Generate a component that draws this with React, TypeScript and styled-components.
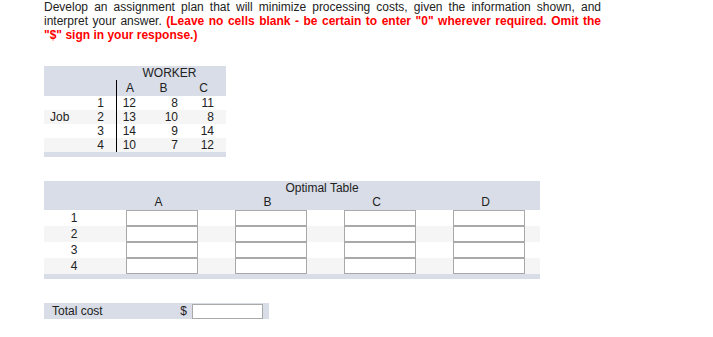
import React from "react";
import styled, { createGlobalStyle } from "styled-components";

const Global = createGlobalStyle`
  html, body { margin: 0; padding: 0; background: #fff; }
  body { font-family: "Liberation Sans", Arial, sans-serif; font-size: 12px; color: #222; }
`;

const Page = styled.div`
  padding-left: 44px;
  display: flex;
  flex-direction: column;
  align-items: flex-start;
`;

const Prompt = styled.p`
  margin: 0;
  width: 557px;
  line-height: 14px;
  text-align: justify;
`;

const Warn = styled.strong`
  color: #f00;
  font-weight: bold;
`;

const HEAD = "#d9dde7";
const STRIPE = "#f5f5f5";

/* ---------- top cost table ---------- */
const CostTable = styled.div`
  margin-top: 24px;
  width: 182px;
  display: flex;
  flex-direction: column;
`;

const costCols = "44px 28px 27px 41px 39px 3px";

const CostRow = styled.div<{ $bg: string; $h: number }>`
  display: grid;
  grid-template-columns: ${costCols};
  height: ${(p) => p.$h}px;
  background: ${(p) => p.$bg};
  line-height: ${(p) => p.$h}px;
`;

const CostCell = styled.div<{ $align?: string; $pad?: number; $line?: boolean; $span?: number; $under?: boolean }>`
  text-align: ${(p) => p.$align || "left"};
  padding-left: ${(p) => (p.$align === "left" || !p.$align ? p.$pad ?? 0 : 0)}px;
  padding-right: ${(p) => (p.$align === "right" ? p.$pad ?? 0 : 0)}px;
  border-left: ${(p) => (p.$line ? "1px solid #000" : "none")};
  border-bottom: ${(p) => (p.$under ? "1px solid #000" : "none")};
  grid-column: ${(p) => (p.$span ? `span ${p.$span}` : "auto")};
  box-sizing: border-box;
  white-space: nowrap;
`;

const BottomBar = styled.div<{ $w?: number }>`
  height: 5px;
  background: ${HEAD};
`;

/* ---------- optimal table ---------- */
const OptTable = styled.div`
  margin-top: 24px;
  width: 496px;
  display: flex;
  flex-direction: column;
`;

const optCols = "60px 109px 109px 109px 109px";

const OptRow = styled.div<{ $bg: string; $h: number }>`
  display: grid;
  grid-template-columns: ${optCols};
  height: ${(p) => p.$h}px;
  background: ${(p) => p.$bg};
`;

const OptTitle = styled.div`
  grid-column: 2 / span 4;
  border-bottom: 1px solid #000;
  text-align: center;
  line-height: 14px;
  height: 14px;
`;

const OptHead = styled.div`
  text-align: center;
  line-height: 15px;
`;

const RowNum = styled.div`
  text-align: center;
  line-height: 16px;
`;

const BoxCell = styled.div`
  display: flex;
  justify-content: flex-end;
  padding-right: 15px;
`;

const Box = styled.input<{ $w?: number; $h?: number }>`
  box-sizing: border-box;
  width: ${(p) => p.$w ?? 72}px;
  height: ${(p) => p.$h ?? 16}px;
  margin: 0;
  padding: 0 2px;
  border: 1px solid #a9a9a9;
  background: #fff;
  font: inherit;
  outline: none;
`;

/* ---------- total cost ---------- */
const TotalBar = styled.div`
  margin-top: 24px;
  width: 225px;
  height: 16px;
  background: ${HEAD};
  display: flex;
  align-items: center;
  padding: 0 6px 0 8px;
  box-sizing: border-box;
`;

const TotalLabel = styled.span`
  flex: 1;
`;

const Dollar = styled.span`
  margin-right: 5px;
`;

const costs = [
  ["1", "12", "8", "11"],
  ["2", "13", "10", "8"],
  ["3", "14", "9", "14"],
  ["4", "10", "7", "12"],
];

export default function App() {
  return (
    <>
      <Global />
      <Page>
        <Prompt>
          Develop an assignment plan that will minimize processing costs, given the information shown, and
          interpret your answer.{" "}
          <Warn>
            (Leave no cells blank - be certain to enter "0" wherever required. Omit the "$" sign in your
            response.)
          </Warn>
        </Prompt>

        <CostTable>
          <CostRow $bg={HEAD} $h={14}>
            <CostCell />
            <CostCell />
            <CostCell $span={3} $align="center" $under>
              WORKER
            </CostCell>
            <CostCell />
          </CostRow>
          <CostRow $bg={HEAD} $h={16}>
            <CostCell />
            <CostCell />
            <CostCell $align="center" $line>
              A
            </CostCell>
            <CostCell $align="center">B</CostCell>
            <CostCell $align="center">C</CostCell>
            <CostCell />
          </CostRow>
          {costs.map((r, i) => (
            <CostRow key={r[0]} $bg={i % 2 === 1 ? STRIPE : "#fff"} $h={14}>
              <CostCell $pad={6}>{i === 1 ? "Job" : ""}</CostCell>
              <CostCell $align="right" $pad={12}>
                {r[0]}
              </CostCell>
              <CostCell $align="right" $pad={7} $line>
                {r[1]}
              </CostCell>
              <CostCell $align="right" $pad={6}>
                {r[2]}
              </CostCell>
              <CostCell $align="right" $pad={9}>
                {r[3]}
              </CostCell>
              <CostCell />
            </CostRow>
          ))}
          <BottomBar />
        </CostTable>

        <OptTable>
          <OptRow $bg={HEAD} $h={14}>
            <div />
            <OptTitle>Optimal Table</OptTitle>
          </OptRow>
          <OptRow $bg={HEAD} $h={15}>
            <div />
            <OptHead>A</OptHead>
            <OptHead>B</OptHead>
            <OptHead>C</OptHead>
            <OptHead>D</OptHead>
          </OptRow>
          {[1, 2, 3, 4].map((n, i) => (
            <OptRow key={n} $bg={i % 2 === 1 ? STRIPE : "#fff"} $h={16}>
              <RowNum>{n}</RowNum>
              {["A", "B", "C", "D"].map((c) => (
                <BoxCell key={c}>
                  <Box type="text" aria-label={`Job ${n} worker ${c}`} />
                </BoxCell>
              ))}
            </OptRow>
          ))}
          <BottomBar />
        </OptTable>

        <TotalBar>
          <TotalLabel>Total cost</TotalLabel>
          <Dollar>$</Dollar>
          <Box type="text" aria-label="Total cost" $w={71} $h={15} />
        </TotalBar>
      </Page>
    </>
  );
}
